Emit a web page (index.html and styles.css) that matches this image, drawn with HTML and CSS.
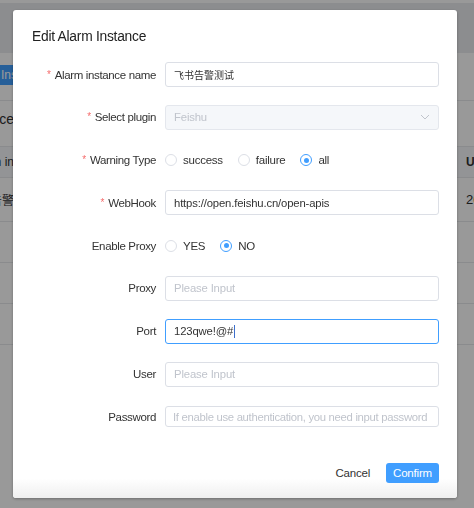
FILE: index.html
```html
<!DOCTYPE html>
<html>
<head>
<meta charset="utf-8">
<link rel="stylesheet" href="styles.css">
</head>
<body>
<div class="page">
  <div class="topline"></div>
  <div class="band"></div>
  <div class="card">
    <div class="bg-row toolbar"><div class="lc wide"><span class="bg-btn">Create Alarm Ins</span></div></div>
    <div class="bg-row title-row"><div class="lc"><span class="bg-title">Alarm Instance</span></div></div>
    <div class="bg-row thead"><div class="lc">Alarm in</div><div class="rc"><b>Update Time</b></div></div>
    <div class="bg-row tr"><div class="lc">飞书告警</div><div class="rc big">2022-03-28</div></div>
    <div class="bg-row tr2"></div>
    <div class="bg-row tr2"></div>
    <div class="bg-row tr2"></div>
  </div>
</div>
<div class="mask"></div>
<div class="dialog">
  <div class="dialog-header"><span class="dialog-title">Edit Alarm Instance</span></div>
  <div class="form">
    <div class="item">
      <div class="label req">Alarm instance name</div>
      <div class="input"><span class="cjk">飞书告警测试</span></div>
    </div>
    <div class="item">
      <div class="label req">Select plugin</div>
      <div class="input disabled">
        <span class="grow">Feishu</span>
        <svg class="chev" width="10" height="6" viewBox="0 0 10 6"><polyline points="1,1 5,5 9,1" fill="none" stroke="#c0c4cc" stroke-width="1"/></svg>
      </div>
    </div>
    <div class="item">
      <div class="label req">Warning Type</div>
      <div class="radios">
        <span class="radio"><span class="dot"></span>success</span>
        <span class="radio"><span class="dot"></span>failure</span>
        <span class="radio"><span class="dot on"></span>all</span>
      </div>
    </div>
    <div class="item">
      <div class="label req">WebHook</div>
      <div class="input">https://open.feishu.cn/open-apis</div>
    </div>
    <div class="item">
      <div class="label">Enable Proxy</div>
      <div class="radios">
        <span class="radio"><span class="dot"></span>YES</span>
        <span class="radio"><span class="dot on"></span>NO</span>
      </div>
    </div>
    <div class="item">
      <div class="label">Proxy</div>
      <div class="input ph">Please Input</div>
    </div>
    <div class="item">
      <div class="label">Port</div>
      <div class="input focus">123qwe!@#<span class="caret"></span></div>
    </div>
    <div class="item">
      <div class="label">User</div>
      <div class="input ph">Please Input</div>
    </div>
    <div class="item">
      <div class="label">Password</div>
      <div class="input ph short">If enable use authentication, you need input password</div>
    </div>
  </div>
  <div class="footer">
    <span class="btn-text">Cancel</span>
    <span class="btn-primary">Confirm</span>
  </div>
</div>
</body>
</html>
```

FILE: styles.css
```css
html, body {
  margin: 0;
  padding: 0;
  width: 474px;
  height: 508px;
  overflow: hidden;
  font-family: "Liberation Sans", Arial, "Noto Sans CJK SC", sans-serif;
}

.page {
  width: 474px;
  height: 508px;
  background: #eef0f3;
  display: flex;
  flex-direction: column;
}

.topline {
  height: 3px;
  background: #ffffff;
}

.band {
  height: 50px;
  background: #e9ebee;
}

.card {
  flex: 1;
  background: #ffffff;
  display: flex;
  flex-direction: column;
}

.bg-row {
  display: flex;
  align-items: center;
  border-bottom: 1px solid #e6e8eb;
  font-size: 12px;
  color: #303133;
}

.lc {
  width: 14px;
  flex: none;
  display: flex;
  justify-content: flex-end;
  white-space: nowrap;
}

.lc.wide {
  width: 17px;
}

.rc {
  margin-left: auto;
  width: 8px;
  white-space: nowrap;
}

.rc.big {
  font-size: 13px;
}

.toolbar {
  height: 47px;
}

.bg-btn {
  background: #409eff;
  color: #fff;
  height: 20px;
  line-height: 20px;
  padding: 0 0 0 10px;
  border-radius: 3px 0 0 3px;
  margin-top: -4px;
}

.title-row {
  height: 45px;
  align-items: flex-start;
}

.bg-title {
  margin-top: 10px;
  font-size: 14px;
  color: #303133;
}

.thead {
  height: 30px;
  background: #f5f7fa;
}

.tr {
  height: 43px;
}

.tr2 {
  height: 40px;
}

.mask {
  position: fixed;
  inset: 0;
  background: rgba(0, 0, 0, 0.4);
}

.dialog {
  position: fixed;
  left: 13px;
  top: 10px;
  width: 444px;
  height: 488px;
  background: #ffffff;
  border-radius: 3px;
  display: flex;
  flex-direction: column;
  box-shadow: 0 1px 3px rgba(0, 0, 0, 0.3);
  color: #333333;
}

.dialog-header {
  padding: 17px 19px 0;
  height: 18px;
}

.dialog-title {
  font-size: 13.8px;
  line-height: 18px;
  letter-spacing: -0.25px;
  color: #222222;
}

.form {
  padding: 17px 18px 0 0;
  display: flex;
  flex-direction: column;
  gap: 17.8px;
}

.item {
  display: flex;
  align-items: center;
  height: 25px;
}

.label {
  width: 152px;
  flex: none;
  padding-right: 9px;
  box-sizing: border-box;
  text-align: right;
  font-size: 11.5px;
  letter-spacing: -0.35px;
  color: #333333;
  white-space: nowrap;
}

.req::before {
  content: "*";
  color: #f56c6c;
  margin-right: 4px;
  font-size: 10px;
  position: relative;
  top: -1px;
}

.input {
  flex: 1;
  height: 25px;
  box-sizing: border-box;
  border: 1px solid #dcdfe6;
  border-radius: 3px;
  padding: 0 8px;
  font-size: 11.3px;
  letter-spacing: -0.15px;
  display: flex;
  align-items: center;
  color: #333333;
  white-space: nowrap;
  overflow: hidden;
}

.input.short {
  height: 21px;
  padding-left: 7px;
  letter-spacing: -0.3px;
}

.cjk {
  font-family: "Noto Sans CJK SC", sans-serif;
  font-size: 10px;
  letter-spacing: 0;
}

.input.ph {
  color: #c0c4cc;
}

.input.disabled {
  background: #f5f7fa;
  border-color: #e4e7ed;
  color: #c0c4cc;
}

.input.focus {
  border-color: #409eff;
}

.caret {
  display: inline-block;
  width: 1px;
  height: 13px;
  background: #3d6fcc;
  margin-left: 1px;
}

.grow {
  flex: 1;
}

.radios {
  display: flex;
  align-items: center;
  gap: 15px;
}

.radio {
  display: flex;
  align-items: center;
  gap: 6px;
  font-size: 11.5px;
  letter-spacing: -0.25px;
  color: #333333;
}

.dot {
  width: 12px;
  height: 12px;
  box-sizing: border-box;
  border: 1px solid #dcdfe6;
  border-radius: 50%;
  display: flex;
  align-items: center;
  justify-content: center;
  background: #fff;
}

.dot.on {
  border-color: #409eff;
}

.dot.on::after {
  content: "";
  width: 5px;
  height: 5px;
  border-radius: 50%;
  background: #409eff;
}

.footer {
  margin-top: auto;
  display: flex;
  justify-content: flex-end;
  align-items: center;
  gap: 16px;
  padding: 14px 18px 15px;
  background: linear-gradient(to bottom, #ffffff 60%, #efefef 100%);
  border-radius: 0 0 3px 3px;
}

.btn-text {
  font-size: 11.5px;
  letter-spacing: -0.2px;
  color: #333333;
}

.btn-primary {
  width: 53px;
  height: 20px;
  line-height: 20px;
  text-align: center;
  background: #409eff;
  color: #ffffff;
  font-size: 11.5px;
  letter-spacing: -0.2px;
  border-radius: 3px;
}
```
